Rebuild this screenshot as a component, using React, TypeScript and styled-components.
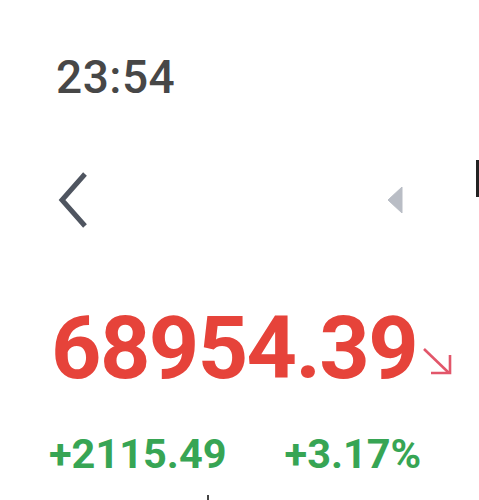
import React from "react";
import styled, { createGlobalStyle } from "styled-components";

const Global = createGlobalStyle`
  html, body { margin: 0; padding: 0; background: #ffffff; }
  body { font-family: Roboto, "Liberation Sans", Arial, sans-serif; }
`;

const Screen = styled.div`
  width: 479px;
  height: 500px;
  overflow: hidden;
  background: #ffffff;
  display: flex;
  flex-direction: column;
`;

const StatusBar = styled.div`
  padding: 54px 0 0 56px;
`;

const Clock = styled.div`
  font-size: 46px;
  line-height: 46px;
  font-weight: 500;
  color: #474747;
  letter-spacing: 0.5px;
`;

const NavRow = styled.div`
  margin-top: 72px;
  height: 56px;
  display: flex;
  align-items: center;
  padding-left: 58px;
`;

const BackIcon = styled.svg`
  width: 30px;
  height: 56px;
  flex: none;
`;

const Caret = styled.svg`
  width: 16px;
  height: 26px;
  margin-left: 299px;
  flex: none;
`;

const EdgeBar = styled.div`
  align-self: flex-start;
  margin-top: -12px;
  margin-left: 73px;
  width: 3px;
  height: 37px;
  background: #222222;
  flex: none;
`;

const PriceRow = styled.div`
  margin-top: 76px;
  display: flex;
  align-items: flex-end;
  padding-left: 51px;
`;

const Price = styled.div`
  font-size: 88px;
  line-height: 88px;
  font-weight: 700;
  letter-spacing: -1.6px;
  color: #e6433a;
`;

const TrendArrow = styled.svg`
  width: 32px;
  height: 30px;
  margin-left: 4px;
  margin-bottom: 16px;
  flex: none;
`;

const ChangeRow = styled.div`
  margin-top: 41px;
  display: flex;
  gap: 58px;
  padding-left: 49px;
`;

const Change = styled.div`
  font-size: 41.5px;
  line-height: 41px;
  font-weight: 700;
  color: #37a554;
`;

const BottomTick = styled.div`
  margin: 21px 0 0 207px;
  width: 2px;
  height: 6px;
  background: #444444;
`;

export default function App() {
  return (
    <>
      <Global />
      <Screen>
        <StatusBar>
          <Clock>23:54</Clock>
        </StatusBar>
        <NavRow>
          <BackIcon viewBox="0 0 30 56">
            <polyline
              points="27,2 4,28 27,54"
              fill="none"
              stroke="#4f5560"
              strokeWidth="5"
              strokeLinejoin="miter"
            />
          </BackIcon>
          <Caret viewBox="0 0 16 26">
            <polygon points="15,0 1,13 15,26" fill="#b9bdc5" stroke="#b9bdc5" strokeWidth="1" strokeLinejoin="round" />
          </Caret>
          <EdgeBar />
        </NavRow>
        <PriceRow>
          <Price>68954.39</Price>
          <TrendArrow viewBox="0 0 32 30">
            <g fill="none" stroke="#e2566a" strokeWidth="2.6" strokeLinecap="butt">
              <line x1="3" y1="3" x2="28" y2="27" />
              <polyline points="10,27 29,27 29,9" />
            </g>
          </TrendArrow>
        </PriceRow>
        <ChangeRow>
          <Change>+2115.49</Change>
          <Change>+3.17%</Change>
        </ChangeRow>
        <BottomTick />
      </Screen>
    </>
  );
}
